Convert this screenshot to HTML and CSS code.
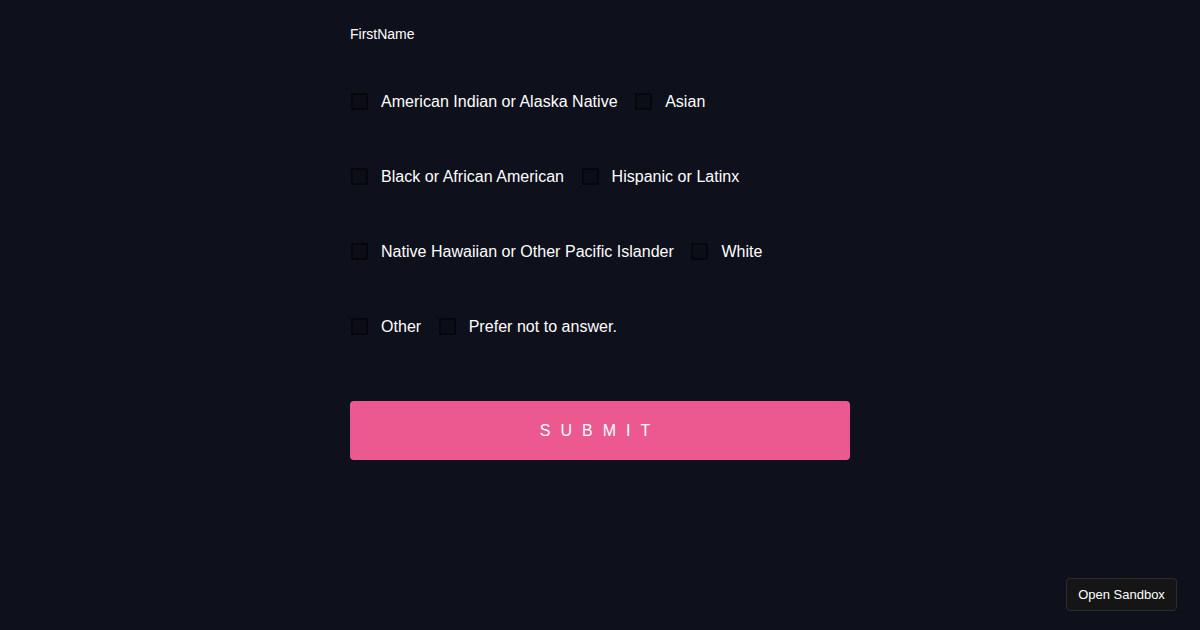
FILE: index.html
```html
<!DOCTYPE html>
<html>
<head>
<meta charset="utf-8">
<link rel="stylesheet" href="styles.css">
</head>
<body>
<form class="form">
  <label class="field-label">FirstName</label>
  <div class="row">
    <label class="opt"><span class="box"></span><span class="txt">American Indian or Alaska Native</span></label>
    <label class="opt"><span class="box"></span><span class="txt">Asian</span></label>
  </div>
  <div class="row">
    <label class="opt"><span class="box"></span><span class="txt">Black or African American</span></label>
    <label class="opt"><span class="box"></span><span class="txt">Hispanic or Latinx</span></label>
  </div>
  <div class="row">
    <label class="opt"><span class="box"></span><span class="txt">Native Hawaiian or Other Pacific Islander</span></label>
    <label class="opt"><span class="box"></span><span class="txt">White</span></label>
  </div>
  <div class="row">
    <label class="opt"><span class="box"></span><span class="txt">Other</span></label>
    <label class="opt"><span class="box"></span><span class="txt">Prefer not to answer.</span></label>
  </div>
  <button type="button" class="submit">Submit</button>
</form>
<button type="button" class="sandbox">Open Sandbox</button>
</body>
</html>
```

FILE: styles.css
```css
html, body {
  margin: 0;
  padding: 0;
  background: #0e101b;
  height: 630px;
  overflow: hidden;
}
body {
  font-family: "Liberation Sans", Arial, Helvetica, sans-serif;
  color: #ffffff;
  position: relative;
}
.form {
  width: 500px;
  margin: 0 auto;
  padding-top: 20px;
  display: flex;
  flex-direction: column;
}
.field-label {
  font-size: 14px;
  line-height: 28px;
  height: 28px;
  margin-bottom: 16px;
  color: #ffffff;
}
.row {
  height: 75px;
  display: flex;
  align-items: center;
  gap: 16.5px;
}
.opt {
  display: flex;
  align-items: center;
  font-size: 16px;
  line-height: 20px;
  color: #ffffff;
  letter-spacing: 0.03px;
}
.box {
  width: 13px;
  height: 13px;
  border: 2px solid #06070c;
  background: #0c0e17;
  border-radius: 1px;
  margin-left: 1px;
  margin-right: 13px;
  flex: none;
}
.submit {
  margin-top: 37px;
  height: 59px;
  width: 500px;
  border: none;
  border-radius: 4px;
  background: #ec5990;
  color: #ffffff;
  font-family: "Liberation Sans", Arial, Helvetica, sans-serif;
  font-size: 16px;
  text-transform: uppercase;
  letter-spacing: 10px;
  padding: 0;
}
.sandbox {
  position: absolute;
  right: 23px;
  bottom: 19px;
  width: 111px;
  height: 33px;
  background: #151515;
  border: 1px solid #2d2d2f;
  border-radius: 4px;
  color: #ffffff;
  font-family: "Liberation Sans", Arial, Helvetica, sans-serif;
  font-size: 13px;
  padding: 0;
}
```
